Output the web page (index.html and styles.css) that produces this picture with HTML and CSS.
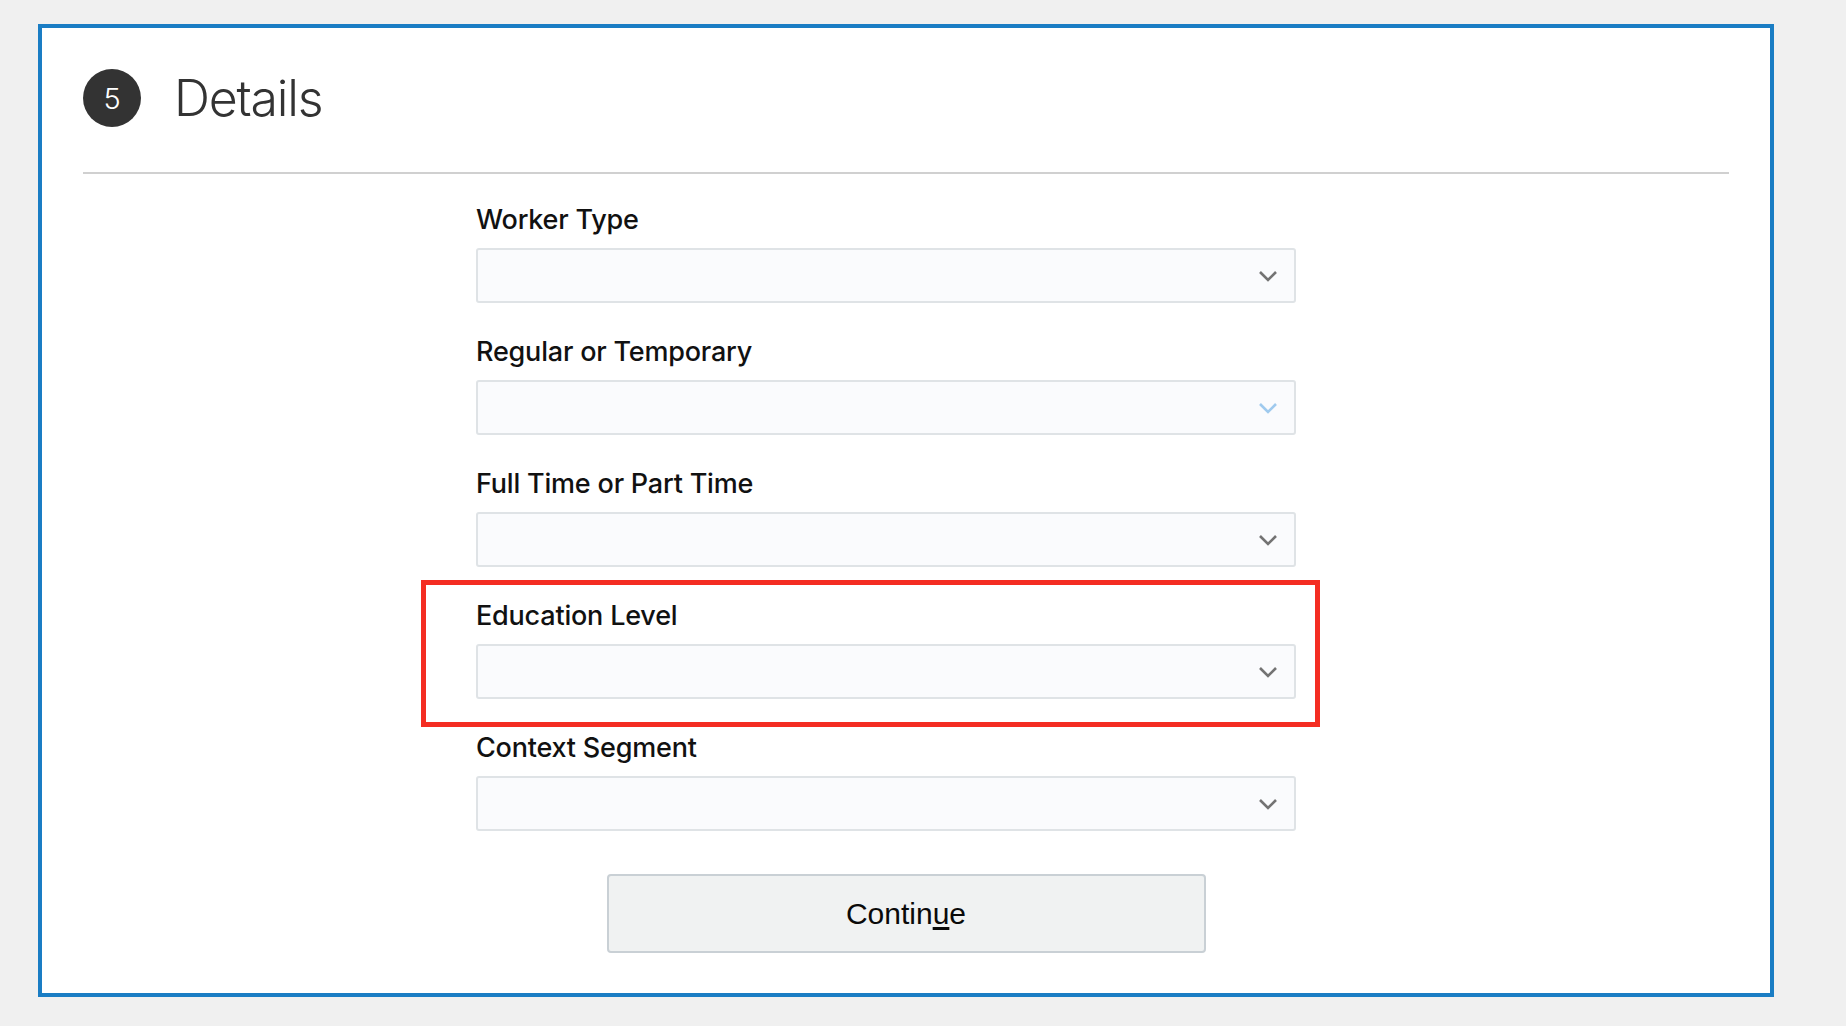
FILE: index.html
```html
<!DOCTYPE html>
<html lang="en">
<head>
<meta charset="utf-8">
<title>Details</title>
<link rel="stylesheet" href="styles.css">
</head>
<body>
<div class="page">
  <section class="panel">
    <header class="panel-header">
      <span class="step-badge">5</span>
      <h1 class="panel-title">Details</h1>
    </header>
    <div class="divider"></div>
    <form class="form">
      <div class="field">
        <label class="field-label">Worker Type</label>
        <div class="select">
          <svg class="chevron" viewBox="0 0 20 12" width="20" height="12"><polyline points="2,2 10,10 18,2" /></svg>
        </div>
      </div>
      <div class="field">
        <label class="field-label">Regular or Temporary</label>
        <div class="select">
          <svg class="chevron chevron-blue" viewBox="0 0 20 12" width="20" height="12"><polyline points="2,2 10,10 18,2" /></svg>
        </div>
      </div>
      <div class="field">
        <label class="field-label">Full Time or Part Time</label>
        <div class="select">
          <svg class="chevron" viewBox="0 0 20 12" width="20" height="12"><polyline points="2,2 10,10 18,2" /></svg>
        </div>
      </div>
      <div class="field field-highlight">
        <label class="field-label">Education Level</label>
        <div class="select">
          <svg class="chevron" viewBox="0 0 20 12" width="20" height="12"><polyline points="2,2 10,10 18,2" /></svg>
        </div>
        <div class="highlight-box"></div>
      </div>
      <div class="field">
        <label class="field-label">Context Segment</label>
        <div class="select">
          <svg class="chevron" viewBox="0 0 20 12" width="20" height="12"><polyline points="2,2 10,10 18,2" /></svg>
        </div>
      </div>
    </form>
    <div class="actions">
      <button type="button" class="btn">Contin<span class="mnemonic">u</span>e</button>
    </div>
  </section>
</div>
</body>
</html>
```

FILE: styles.css
```css
html, body {
  margin: 0;
  padding: 0;
  background: #f0f0f0;
}

.page {
  padding: 24px 0 0 38px;
  height: 1026px;
  box-sizing: border-box;
}

.panel {
  width: 1736px;
  height: 973px;
  box-sizing: border-box;
  border: 4px solid #1a7dc4;
  background: #ffffff;
  padding: 0 41px;
  display: flex;
  flex-direction: column;
}

.panel-header {
  display: flex;
  align-items: center;
  height: 144px;
  padding-bottom: 4px;
  box-sizing: border-box;
  gap: 33px;
}

.step-badge {
  width: 58px;
  height: 58px;
  border-radius: 50%;
  background: #333333;
  color: #ffffff;
  font-family: "Inter", "Liberation Sans", sans-serif;
  font-weight: 300;
  font-size: 29px;
  display: flex;
  align-items: center;
  justify-content: center;
  flex: none;
}

.panel-title {
  margin: 0;
  font-family: "Inter", "Liberation Sans", sans-serif;
  font-weight: 300;
  font-size: 50px;
  color: #333333;
  letter-spacing: -1.2px;
}

.divider {
  height: 2px;
  background: #d0d0d0;
}

.form {
  margin: 0 0 0 393px;
  width: 820px;
  padding-top: 26px;
  display: flex;
  flex-direction: column;
  gap: 29px;
}

.field {
  display: flex;
  flex-direction: column;
  gap: 8px;
  position: relative;
}

.field-label {
  font-family: "Inter", "Liberation Sans", sans-serif;
  font-weight: 500;
  font-size: 27px;
  line-height: 40px;
  color: #111111;
  letter-spacing: -0.2px;
}

.select {
  height: 55px;
  box-sizing: border-box;
  border: 2px solid #dfe3e6;
  border-radius: 3px;
  background: #fafbfd;
  display: flex;
  align-items: center;
  justify-content: flex-end;
  padding-right: 16px;
}

.chevron {
  display: block;
  fill: none;
  stroke: #737373;
  stroke-width: 2.6;
}

.chevron-blue {
  stroke: #9fcaee;
}

.highlight-box {
  position: absolute;
  left: -55px;
  right: -24px;
  top: -16px;
  bottom: -28px;
  border: 5px solid #f42d22;
  pointer-events: none;
}

.actions {
  display: flex;
  justify-content: center;
  padding-top: 43px;
}

.btn {
  width: 599px;
  height: 79px;
  box-sizing: border-box;
  border: 2px solid #c9d0d5;
  border-radius: 4px;
  background: #f0f2f2;
  font-family: "Liberation Sans", Arial, sans-serif;
  font-size: 30px;
  color: #0a0a0a;
  cursor: pointer;
}

.mnemonic {
  text-decoration: underline;
  text-underline-offset: 3px;
}
```
